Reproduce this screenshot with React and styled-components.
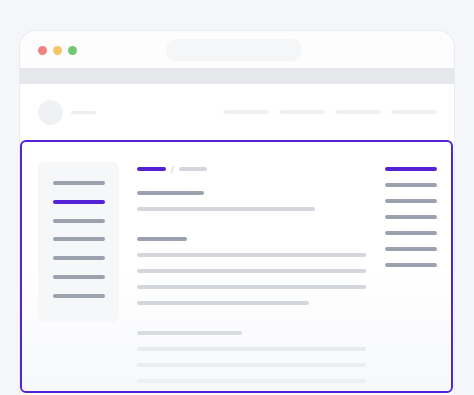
import React from "react";
import styled, { createGlobalStyle } from "styled-components";

const Global = createGlobalStyle`
  html, body { margin: 0; padding: 0; }
  body {
    background: #f5f6f9;
    font-family: "Inter", "Liberation Sans", sans-serif;
    overflow: hidden;
  }
`;

const Page = styled.div`
  width: 474px;
  height: 395px;
  padding: 31px 20px 0 20px;
  box-sizing: border-box;
`;

const Window = styled.div`
  width: 434px;
  height: 364px;
  background: #fdfdfe;
  border-radius: 16px 16px 0 0;
  box-shadow: 0 0 0 1px #eaecf0;
  overflow: hidden;
  display: flex;
  flex-direction: column;
`;

const TitleBar = styled.div`
  height: 37px;
  display: grid;
  grid-template-columns: 128px 136px 1fr;
  align-items: center;
  padding-left: 18px;
  box-sizing: border-box;
`;

const Dots = styled.div`
  display: flex;
  gap: 6px;
  align-items: center;
  margin-top: 1px;
`;

const Dot = styled.span`
  width: 9px;
  height: 9px;
  border-radius: 50%;
  background: ${(p) => p.$c};
`;

const UrlBar = styled.div`
  height: 22px;
  border-radius: 11px;
  background: #f5f6f8;
  margin-top: 1px;
`;

const Band = styled.div`
  height: 16px;
  background: #e5e7eb;
`;

const Header = styled.div`
  height: 56px;
  display: flex;
  align-items: center;
  padding: 0 18px 0 18px;
  background: #ffffff;
`;

const Avatar = styled.div`
  width: 25px;
  height: 25px;
  border-radius: 50%;
  background: #f0f1f4;
`;

const Logo = styled.div`
  width: 25px;
  height: 3px;
  border-radius: 2px;
  background: #eceef1;
  margin-left: 8px;
`;

const Nav = styled.nav`
  margin-left: auto;
  display: flex;
  gap: 11px;
`;

const NavItem = styled.div`
  width: 45px;
  height: 4px;
  border-radius: 2px;
  background: #eef0f3;
`;

const Highlight = styled.div`
  flex: 1;
  margin: 0 1px 2px 0;
  border: 2px solid #5522d6;
  border-radius: 6px;
  background: linear-gradient(180deg, #ffffff 0%, #ffffff 50%, #f7f8fb 100%);
  padding: 20px 14px 0 16px;
  display: grid;
  grid-template-columns: 81px 229px 52px;
  column-gap: 18px;
  align-items: start;
  position: relative;
  overflow: hidden;
`;

const Fade = styled.div`
  position: absolute;
  left: 0;
  right: 0;
  bottom: 0;
  height: 80px;
  background: linear-gradient(180deg, rgba(248, 249, 252, 0) 0%, rgba(248, 249, 252, 0.55) 100%);
  pointer-events: none;
`;

const Sidebar = styled.aside`
  height: 160px;
  background: #f6f7f9;
  border-radius: 6px;
  padding: 19px 0 0 15px;
  box-sizing: border-box;
  display: flex;
  flex-direction: column;
  gap: 14.8px;
`;

const Bar = styled.div`
  width: ${(p) => p.$w}px;
  height: ${(p) => p.$h || 4}px;
  border-radius: 2px;
  flex-shrink: 0;
  background: ${(p) =>
    p.$tone === "active"
      ? "#5522d6"
      : p.$tone === "dark"
      ? "#9ba2ae"
      : p.$tone === "faint"
      ? "#e3e6ea"
      : "#d3d7dd"};
`;

const Main = styled.main`
  padding-top: 5.3px;
  display: flex;
  flex-direction: column;
`;

const Crumbs = styled.div`
  display: flex;
  align-items: center;
  gap: 5px;
  height: 4px;
`;

const Slash = styled.span`
  font-size: 8px;
  line-height: 4px;
  color: #b8bdc6;
`;

const Section = styled.section`
  display: flex;
  flex-direction: column;
  gap: 12px;
  margin-top: ${(p) => p.$top}px;
`;

const Toc = styled.aside`
  margin-left: 1px;
  padding-top: 5.3px;
  display: flex;
  flex-direction: column;
  gap: 12px;
`;

export default function App() {
  return (
    <>
      <Global />
      <Page>
        <Window>
          <TitleBar>
            <Dots>
              <Dot $c="#ef8383" />
              <Dot $c="#f6c56a" />
              <Dot $c="#72c870" />
            </Dots>
            <UrlBar />
          </TitleBar>
          <Band />
          <Header>
            <Avatar />
            <Logo />
            <Nav>
              <NavItem />
              <NavItem />
              <NavItem />
              <NavItem />
            </Nav>
          </Header>
          <Highlight>
            <Sidebar>
              <Bar $w={52} $tone="dark" />
              <Bar $w={52} $tone="active" />
              <Bar $w={52} $tone="dark" />
              <Bar $w={52} $tone="dark" />
              <Bar $w={52} $tone="dark" />
              <Bar $w={52} $tone="dark" />
              <Bar $w={52} $tone="dark" />
            </Sidebar>
            <Main>
              <Crumbs>
                <Bar $w={29} $tone="active" />
                <Slash>/</Slash>
                <Bar $w={28} />
              </Crumbs>
              <Section $top={20}>
                <Bar $w={67} $tone="dark" />
                <Bar $w={178} />
              </Section>
              <Section $top={26}>
                <Bar $w={50} $tone="dark" />
                <Bar $w={229} />
                <Bar $w={229} />
                <Bar $w={229} />
                <Bar $w={172} />
              </Section>
              <Section $top={26}>
                <Bar $w={105} />
                <Bar $w={229} $tone="faint" />
                <Bar $w={229} $tone="faint" />
                <Bar $w={229} $tone="faint" />
              </Section>
            </Main>
            <Toc>
              <Bar $w={52} $tone="active" />
              <Bar $w={52} $tone="dark" />
              <Bar $w={52} $tone="dark" />
              <Bar $w={52} $tone="dark" />
              <Bar $w={52} $tone="dark" />
              <Bar $w={52} $tone="dark" />
              <Bar $w={52} $tone="dark" />
            </Toc>
            <Fade />
          </Highlight>
        </Window>
      </Page>
    </>
  );
}
